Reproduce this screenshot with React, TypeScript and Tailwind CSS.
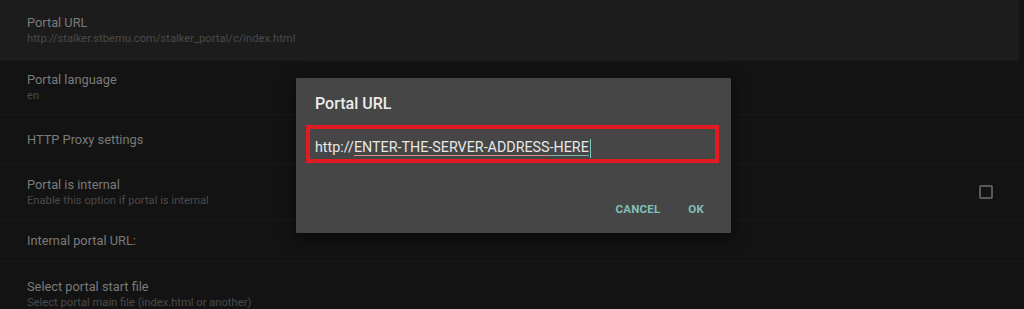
import React from "react";

const font = { fontFamily: "Roboto, 'Noto Sans', sans-serif" };

function Row({
  title,
  sub,
  h,
  highlight,
  right,
}: {
  title: string;
  sub?: string;
  h: string;
  highlight?: boolean;
  right?: React.ReactNode;
}) {
  return (
    <div
      className={`${h} shrink-0 flex items-center border-b border-[#191919] ${
        highlight ? "bg-[#1c1c1c] w-[1019px]" : "w-full"
      }`}
    >
      <div className="flex flex-col pl-[27px] flex-1">
        <div className="text-[12.8px] leading-[16px] text-[#7a7a7a]">{title}</div>
        {sub && (
          <div className="text-[11.2px] leading-[15px] text-[#4a4a4a]">{sub}</div>
        )}
      </div>
      {right}
    </div>
  );
}

export default function App() {
  return (
    <div
      className="relative w-[1024px] h-[309px] overflow-hidden bg-[#131313]"
      style={font}
    >
      <div className="flex flex-col">
        <Row
          title="Portal URL"
          sub="http://stalker.stbemu.com/stalker_portal/c/index.html"
          h="h-[61px]"
          highlight
        />
        <Row title="Portal language" sub="en" h="h-[54px]" />
        <Row title="HTTP Proxy settings" h="h-[50px]" />
        <Row
          title="Portal is internal"
          sub="Enable this option if portal is internal"
          h="h-[55px]"
          right={
            <div className="mr-[31px] w-[14px] h-[14px] border-2 border-[#595959] rounded-[2px]" />
          }
        />
        <Row title="Internal portal URL:" h="h-[42px]" />
        <Row
          title="Select portal start file"
          sub="Select portal main file (index.html or another)"
          h="h-[65px]"
        />
      </div>

      <div className="absolute left-[296px] top-[78px] w-[435px] h-[155px] bg-[#464646] shadow-[0_4px_16px_rgba(0,0,0,0.6)] rounded-[1px] flex flex-col">
        <div className="pl-[19px] pt-[15px] text-[16px] leading-[22px] font-medium text-[#ececec]">
          Portal URL
        </div>
        <div className="ml-[10px] mt-[10px] w-[413px] h-[38px] border-[4px] border-[#e11b22] flex items-center pl-[5px]">
          <span className="text-[14.3px] text-[#e8e8e8] leading-[18px] mt-[5px] flex items-end">
            http://
            <span className="underline decoration-[#d98a8a] underline-offset-[3px]">
              ENTER-THE-SERVER-ADDRESS
            </span>
            <span className="underline decoration-[#7fb5ae] underline-offset-[3px]">
              -HERE
            </span>
            <span className="inline-block w-[1.5px] h-[19px] bg-[#80cbc4] ml-[1px] mb-[-2px]" />
          </span>
        </div>
        <div className="flex justify-end items-center mt-[38px] pr-[27px] gap-[28px] text-[11.5px] font-bold text-[#80c0b8] tracking-[0.2px]">
          <span>CANCEL</span>
          <span>OK</span>
        </div>
      </div>
    </div>
  );
}
